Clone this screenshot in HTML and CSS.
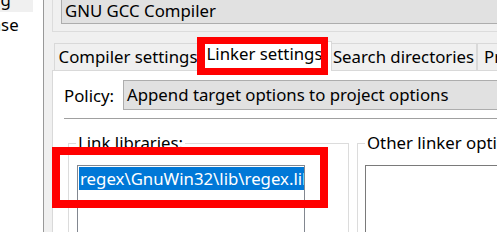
FILE: index.html
```html
<!DOCTYPE html>
<html>
<head>
<meta charset="utf-8">
<link rel="stylesheet" href="styles.css">
</head>
<body>
<div class="window">
  <aside class="tree">
    <div class="tree-item selected">Debug</div>
    <div class="tree-item">Release</div>
  </aside>
  <main class="content">
    <div class="compiler-panel">
      <div class="combo compiler-combo">GNU GCC Compiler</div>
    </div>
    <div class="notebook">
      <div class="tabs">
        <div class="tab tab-compiler">Compiler settings</div>
        <div class="tab tab-linker active">Linker settings</div>
        <div class="tab tab-search">Search directories</div>
        <div class="tab tab-pre">Pre/post build steps</div>
      </div>
      <div class="pane">
        <div class="policy-row">
          <span class="policy-label">Policy:</span>
          <div class="combo policy-combo">Append target options to project options</div>
        </div>
        <div class="separator"></div>
        <div class="groups">
          <fieldset class="group group-libs">
            <legend>Link libraries:</legend>
            <div class="listbox"><div class="list-item selected">regex\GnuWin32\lib\regex.lib</div></div>
          </fieldset>
          <fieldset class="group group-other">
            <legend>Other linker options:</legend>
            <div class="textbox"></div>
          </fieldset>
        </div>
      </div>
    </div>
  </main>
  <div class="highlight-box box-tab"></div>
  <div class="highlight-box box-list"></div>
</div>
</body>
</html>
```
FILE: styles.css
```css
* { box-sizing: border-box; }
html, body { margin: 0; padding: 0; }
body {
  width: 497px;
  height: 232px;
  overflow: hidden;
  background: #f0f0f0;
  font-family: "Noto Sans", "DejaVu Sans", sans-serif;
  font-size: 16.8px;
  color: #000;
}
.window {
  position: relative;
  display: flex;
  width: 497px;
  height: 232px;
  overflow: hidden;
}
.tree {
  flex: 0 0 44px;
  width: 44px;
  background: #fff;
  border-right: 1px solid #999;
  overflow: hidden;
}
.tree-item {
  line-height: 25px;
  margin-left: -42px;
  white-space: nowrap;
}
.tree-item:first-child { margin-top: -13px; }
.tree-item.selected { width: 75px; background: #f0f0f0; }

.content {
  flex: 1;
  min-width: 0;
  overflow: hidden;
}
.compiler-panel {
  margin-left: 8px;
  height: 32px;
  border-left: 1px solid #dcdcdc;
  border-bottom: 1px solid #dcdcdc;
  padding-left: 8px;
  overflow: hidden;
}
.combo {
  background: #e1e1e1;
  border: 1px solid #adadad;
  white-space: nowrap;
  overflow: hidden;
}
.compiler-combo {
  margin-top: -7px;
  height: 31px;
  width: 600px;
  padding: 4px 0 0 3px;
  line-height: 25px;
}
.notebook { margin: 11px 0 0 8px; }
.tabs {
  display: flex;
  align-items: flex-end;
  height: 27px;
  padding-left: 2px;
}
.tab {
  flex: 0 0 auto;
  height: 27px;
  border: 1px solid #d9d9d9;
  border-bottom: none;
  background: #f0f0f0;
  text-align: center;
  white-space: nowrap;
  overflow: hidden;
  line-height: 26px;
}
.tab-compiler { width: 148px; }
.tab-linker { width: 128px; }
.tab-search { width: 147px; border-left: 1px solid #d9d9d9; }
.tab-pre { width: 170px; text-align: left; padding-left: 6px; }
.tab.active {
  position: relative;
  z-index: 1;
  width: 132px;
  height: 30px;
  margin: 0 -2px -1px -2px;
  background: #fff;
  line-height: 24px;
  padding-right: 3px;
}
.pane {
  width: 600px;
  height: 200px;
  border: 1px solid #d9d9d9;
  background: #fff;
}
.policy-row {
  display: flex;
  align-items: center;
  height: 30px;
  margin: 9px 0 0 11px;
}
.policy-label { flex: 0 0 59px; }
.policy-combo {
  flex: 0 0 500px;
  height: 30px;
  line-height: 28px;
  padding-left: 3px;
}
.separator {
  height: 1px;
  margin: 8px 0 0 11px;
  background: #a0a0a0;
}
.groups {
  display: flex;
  gap: 8px;
  margin: 13px 0 0 15px;
}
.group {
  margin: 0;
  padding: 0;
  min-width: 0;
  height: 150px;
  border: 1px solid #dcdcdc;
}
.group legend {
  padding: 0 2px;
  margin-left: 7px;
  line-height: 22px;
}
.group-libs { flex: 0 0 281px; }
.group-other { flex: 0 0 300px; }
.listbox {
  width: 228px;
  height: 120px;
  margin: 11px 0 0 8px;
  border: 1px solid #828790;
  background: #fff;
  padding: 1px 0 0 1px;
  overflow: hidden;
}
.list-item {
  height: 23px;
  line-height: 23px;
  padding-left: 1px;
  white-space: nowrap;
  overflow: hidden;
}
.list-item.selected { background: #0078d7; color: #fff; }
.textbox {
  width: 400px;
  height: 120px;
  margin: 11px 0 0 7px;
  border: 1px solid #7a7a7a;
  background: #fff;
}
.highlight-box {
  position: absolute;
  border: 7px solid #ff0000;
  pointer-events: none;
  z-index: 5;
}
.box-tab {
  left: 197px;
  top: 37px;
  width: 131px;
  height: 38px;
  border-left-width: 8px;
}
.box-list {
  left: 52px;
  top: 147px;
  width: 276px;
  height: 61px;
  border-width: 8px;
}
```
